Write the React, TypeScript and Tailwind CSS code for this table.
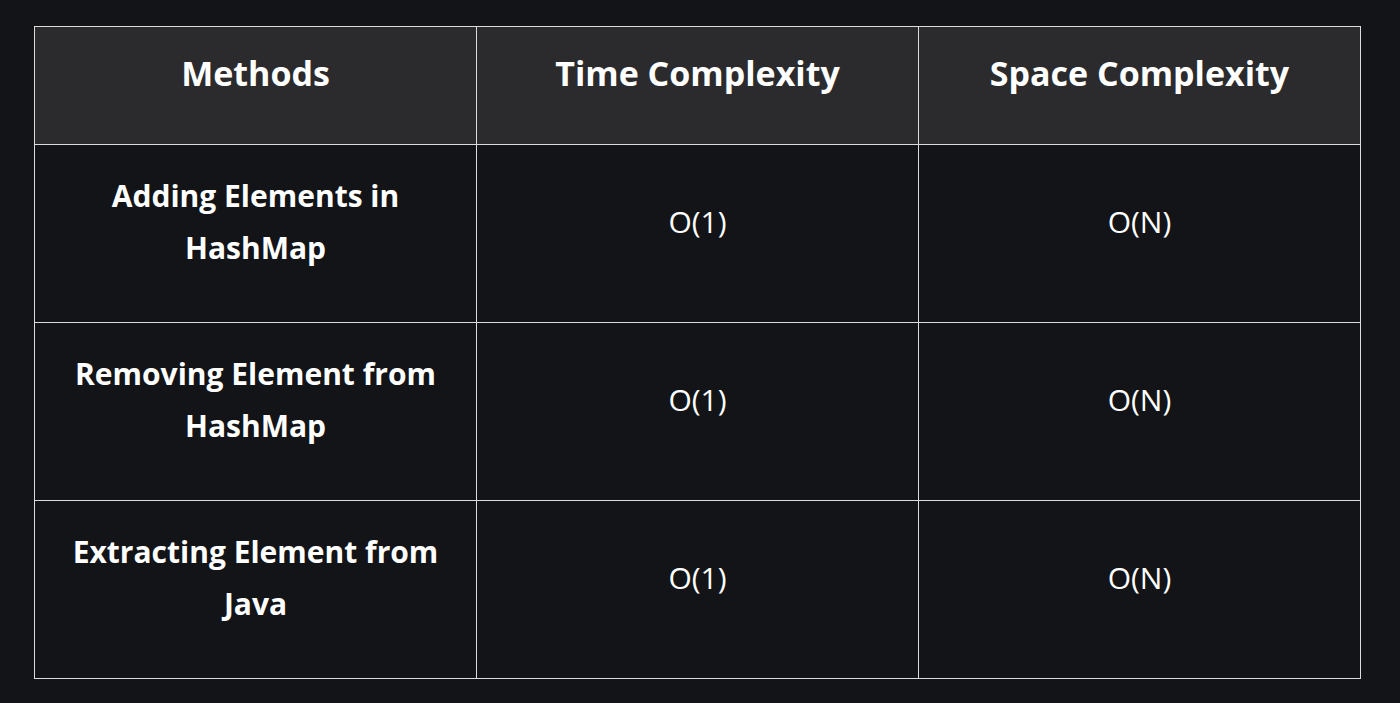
import React from "react";

const rows: { m: [string, string]; t: string; s: string }[] = [
  { m: ["Adding Elements in", "HashMap"], t: "O(1)", s: "O(N)" },
  { m: ["Removing Element from", "HashMap"], t: "O(1)", s: "O(N)" },
  { m: ["Extracting Element from", "Java"], t: "O(1)", s: "O(N)" },
];

export default function App() {
  return (
    <div
      className="w-[1400px] h-[703px] bg-[#131417] pt-[26px] pl-[34px]"
      style={{ fontFamily: "'Open Sans', Lato, sans-serif" }}
    >
      <table className="border-collapse w-[1327px] text-white table-fixed">
        <thead>
          <tr className="h-[118px] bg-[#2b2b2d]">
            {["Methods", "Time Complexity", "Space Complexity"].map((h) => (
              <th
                key={h}
                className="border border-[#dcdcdc] text-[34px] font-bold text-center align-middle w-[442px] p-0 pb-[24px]"
              >
                {h}
              </th>
            ))}
          </tr>
        </thead>
        <tbody>
          {rows.map((r, i) => (
            <tr key={i} className="h-[178px]">
              <td className="border border-[#dcdcdc] text-center align-middle font-bold text-[30px] leading-[52px] p-0 pb-[24px]">
                <div>{r.m[0]}</div>
                <div>{r.m[1]}</div>
              </td>
              <td className="border border-[#dcdcdc] text-center align-middle text-[30px] p-0 pb-[24px]">
                {r.t}
              </td>
              <td className="border border-[#dcdcdc] text-center align-middle text-[30px] p-0 pb-[24px]">
                {r.s}
              </td>
            </tr>
          ))}
        </tbody>
      </table>
    </div>
  );
}
